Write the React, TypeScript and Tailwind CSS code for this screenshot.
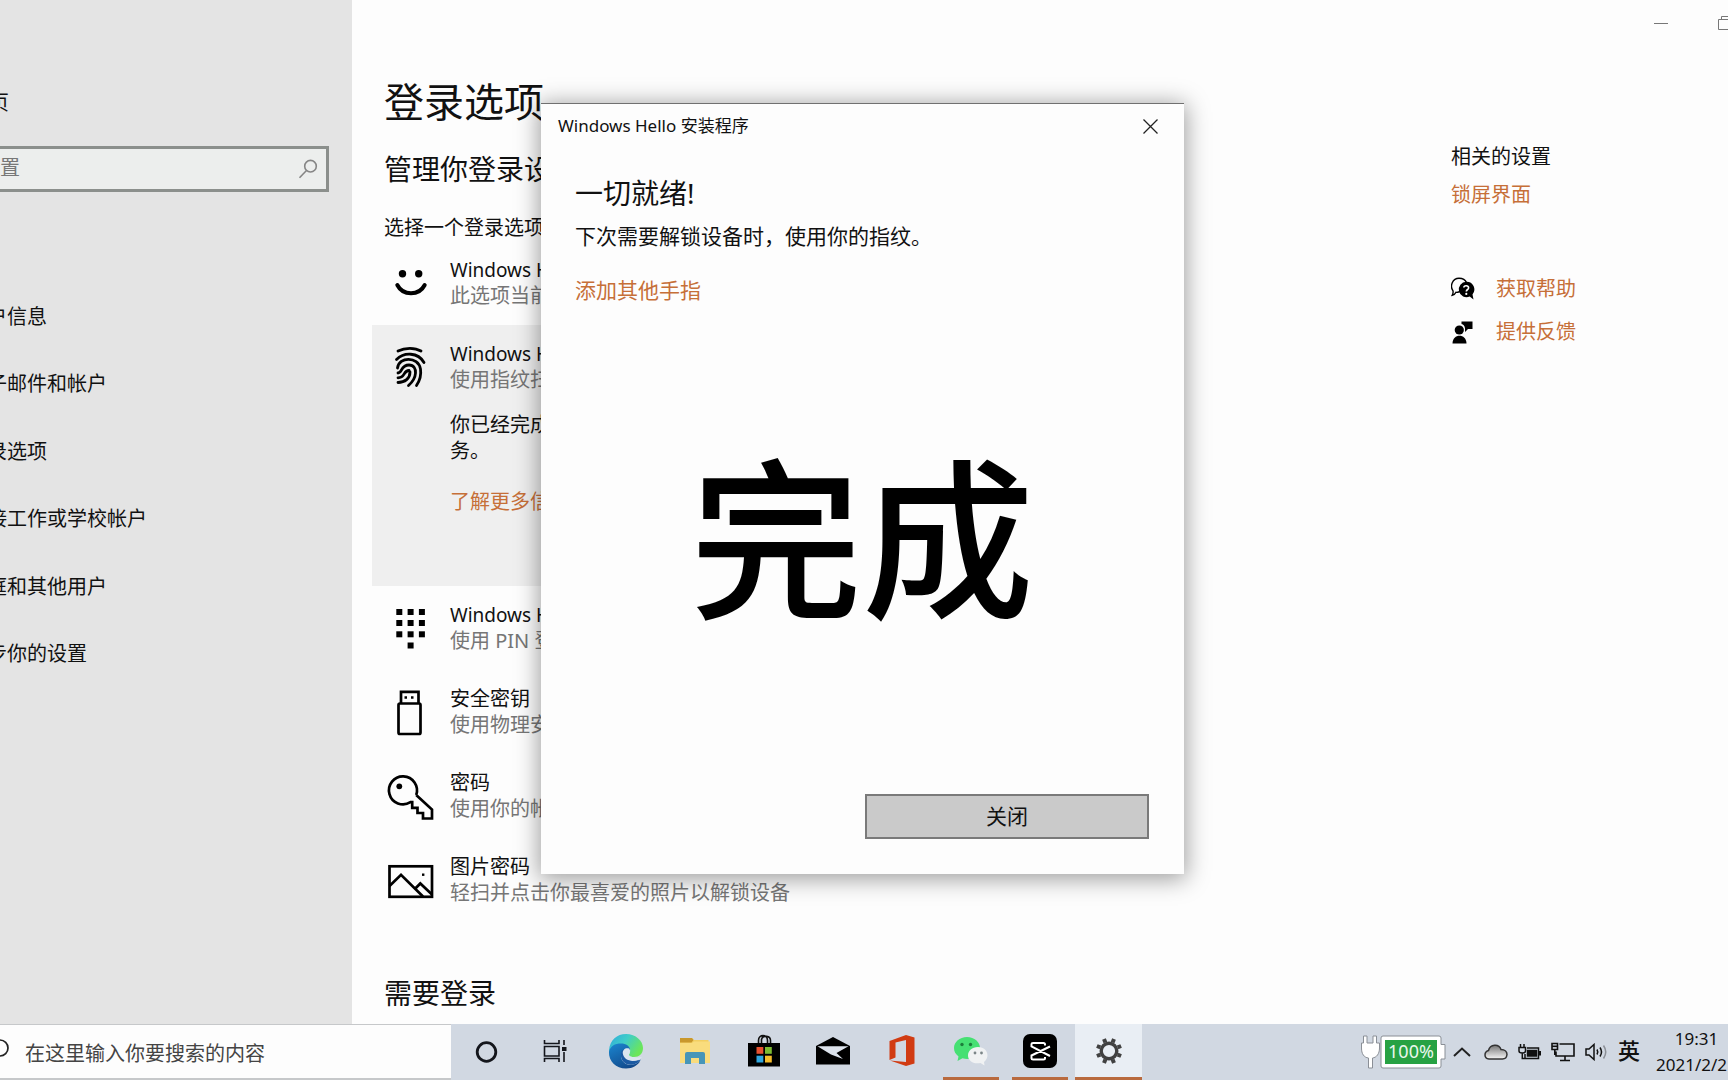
import React from "react";

const ICON = "h-[46px] w-[46px] shrink-0 overflow-visible";

function SmileIcon() {
  return (
    <svg viewBox="0 0 46 46" className={ICON} aria-hidden="true">
      <circle cx="14.5" cy="13.7" r="3.7" />
      <circle cx="30.7" cy="13.7" r="3.7" />
      <path d="M9.3 25C15 36 31 36 36.7 25" fill="none" stroke="#000" strokeWidth="4" strokeLinecap="round" />
    </svg>
  );
}

function FingerprintIcon() {
  return (
    <svg viewBox="0 0 46 46" className={ICON} fill="none" stroke="#000" strokeWidth="2.8" strokeLinecap="round" aria-hidden="true">
      <path d="M10 7C17 3.4 27 3.4 33 7" />
      <path d="M8.5 15.5C16 8 30 8 36 18.5" />
      <path d="M9.5 24C11 12.5 30 12 32.5 25C33.4 31 31.5 37 28.5 41.5" />
      <path d="M10 29C14.5 29 12.5 21 21 21C26 21 27.8 25 27.5 29C27.2 34 24.5 38 20.5 41.5" />
      <path d="M10 33.8C17.5 33.8 15 26.5 21 26.5" />
      <path d="M10 38.5C17 38.5 22 34.5 22 28" />
    </svg>
  );
}

function KeypadIcon() {
  const xs = [8.3, 19.6, 30.9];
  const ys = [4, 15, 26.3];
  return (
    <svg viewBox="0 0 46 46" className={ICON} aria-hidden="true">
      {ys.map((y) => xs.map((x) => <rect key={`${x}-${y}`} x={x} y={y} width="6" height="6" />))}
      <rect x="19.6" y="37.5" width="6" height="6" />
    </svg>
  );
}

function UsbIcon() {
  return (
    <svg viewBox="0 0 46 46" className={ICON} fill="none" stroke="#000" strokeWidth="2.7" aria-hidden="true">
      <rect x="10.5" y="14.5" width="22" height="30.5" rx="1.5" />
      <path d="M13 14.5V2.8H30.5V14.5" />
      <path d="M16.5 8.5H19M23 8.5H25.5" strokeWidth="2.5" />
    </svg>
  );
}

function KeyIcon() {
  return (
    <svg viewBox="0 0 46 46" className={ICON} fill="none" stroke="#000" strokeWidth="2.7" aria-hidden="true">
      <path d="M28.2 22A14 14 0 1 0 22.5 29.2H24.2V34.8H29.5V40H35V45.5H44V36.5L28.2 22" />
      <circle cx="11.3" cy="13.3" r="2.9" fill="#000" stroke="none" />
    </svg>
  );
}

function PictureIcon() {
  return (
    <svg viewBox="0 0 46 46" className={ICON} fill="none" stroke="#000" strokeWidth="2.7" aria-hidden="true">
      <rect x="1.5" y="9.3" width="42.5" height="30.5" />
      <path d="M1.5 29L13 17.8L35 39.5M27.3 31.5L32.3 26.5L44 37.5" />
      <rect x="34" y="16.5" width="2.4" height="2.4" fill="#000" stroke="none" />
    </svg>
  );
}

function HelpIcon() {
  return (
    <svg viewBox="0 0 24 24" className="h-6 w-6 overflow-visible" aria-hidden="true">
      <path d="M9 14.5C7.5 15 6.5 15.5 5 15.3C4.3 16.8 3 18 1.2 18.3C2 17 2.3 15.5 2 13.8C-1.5 9 1.5 1.2 8 1.2C12 1.2 14.5 3 15.5 5.5" fill="none" stroke="#000" strokeWidth="1.4" />
      <path d="M15.3 4.8a7.7 7.7 0 1 0 3.4 14.7l3.8 3-1-5A7.7 7.7 0 0 0 15.3 4.8z" />
      <path d="M12.8 10.5C13 8 17.8 8 17.6 11C17.5 12.6 15.3 12.5 15.3 14.6" fill="none" stroke="#fff" strokeWidth="1.6" />
      <circle cx="15.3" cy="16.9" r="1.1" fill="#fff" />
    </svg>
  );
}

function FeedbackIcon() {
  return (
    <svg viewBox="0 0 24 24" className="h-6 w-6" aria-hidden="true">
      <circle cx="8.3" cy="10" r="4.6" />
      <path d="M1.5 23.5C1.5 13 15.5 13 15.5 23.5z" />
      <path d="M10.5 1.5H21.5V9H17L14 12V8.5C13.8 6 12.5 4.5 10.5 4z" />
    </svg>
  );
}

const navItems = ["帐户信息", "电子邮件和帐户", "登录选项", "连接工作或学校帐户", "家庭和其他用户", "同步你的设置"];

function Sidebar() {
  return (
    <nav className="w-[352px] shrink-0 overflow-hidden bg-[#e4e4e4]" aria-label="设置">
      <div className="-ml-[33px] flex flex-col">
        <a href="#home" className="ml-[2px] mt-[88px] leading-[30px]">主页</a>
        <label className="-ml-10 mr-[23px] mt-[28px] flex h-[46px] items-center border-[3px] border-[#8b8f8c] bg-[#eceeed]">
          <input type="search" placeholder="查找设置" aria-label="查找设置" className="min-w-0 flex-1 bg-transparent pb-[2px] pl-[10px] outline-none placeholder:text-[#777]" />
          <svg viewBox="0 0 20 20" className="mr-2 h-5 w-5" fill="none" stroke="#858585" strokeWidth="1.6" aria-hidden="true">
            <circle cx="12.5" cy="7.2" r="5.8" />
            <path d="M8.5 11.5L1.5 18.8" />
          </svg>
        </label>
        <ul className="mt-[91px] grid h-[405px] grid-rows-6">
          {navItems.map((item) => (
            <li key={item} className="flex items-center">
              <a href="#nav">{item}</a>
            </li>
          ))}
        </ul>
      </div>
    </nav>
  );
}

type OptionProps = { icon: React.ReactNode; title: string; detail: string; active?: boolean; children?: React.ReactNode };

function Option({ icon, title, detail, active, children }: OptionProps) {
  return (
    <li className={active ? "flex h-[261px] gap-4 bg-[#efefef] pl-4" : "flex h-[84px] gap-4 pl-4"}>
      <div className="pt-[19px]">{icon}</div>
      <div className="pt-4 leading-[26px]">
        <h3 className={title.startsWith("W") ? "text-[19px]" : ""}>{title}</h3>
        <p className="text-[#767676]">{detail}</p>
        {children}
      </div>
    </li>
  );
}

function SignInOptions() {
  return (
    <main className="min-w-0 flex-1 overflow-hidden whitespace-nowrap pl-8">
      <h1 className="mt-[77px] text-[40px] leading-[50px]">登录选项</h1>
      <h2 className="mt-[22px] text-[28px] leading-10">管理你登录设</h2>
      <p className="mt-[26px] leading-[26px]">选择一个登录选项</p>
      <ul className="-ml-3 w-[600px]">
        <Option icon={<SmileIcon />} title="Windows Hello" detail="此选项当前" />
        <Option icon={<FingerprintIcon />} title="Windows Hello" detail="使用指纹扫" active>
          <p className="mt-[19px]">
            你已经完成
            <br />
            务。
          </p>
          <a href="#more" className="mt-[25px] block text-[#c66f38]">了解更多信</a>
        </Option>
        <Option icon={<KeypadIcon />} title="Windows Hello" detail="使用 PIN 登" />
        <Option icon={<UsbIcon />} title="安全密钥" detail="使用物理安" />
        <Option icon={<KeyIcon />} title="密码" detail="使用你的帐" />
        <Option icon={<PictureIcon />} title="图片密码" detail="轻扫并点击你最喜爱的照片以解锁设备" />
      </ul>
      <h2 className="mt-[51px] text-[28px] leading-10">需要登录</h2>
    </main>
  );
}

function RelatedPanel() {
  return (
    <aside className="w-[277px] shrink-0 overflow-hidden">
      <div className="ml-[203px] flex h-[46px] w-[78px] items-center justify-between">
        <button type="button" aria-label="最小化">
          <svg viewBox="0 0 14 14" className="h-[14px] w-[14px]" aria-hidden="true"><path d="M0 7.5H14" stroke="#777" /></svg>
        </button>
        <button type="button" aria-label="还原">
          <svg viewBox="0 0 14 14" className="h-[14px] w-[14px]" fill="none" stroke="#777" aria-hidden="true"><path d="M.5 3.5H10.5V13.5H.5zM3.5 3.5V.5H13.5V10.5H10.5" /></svg>
        </button>
      </div>
      <h2 className="mt-[97px] leading-7">相关的设置</h2>
      <a href="#lock" className="mt-[10px] block leading-7 text-[#c66f38]">锁屏界面</a>
      <a href="#help" className="mt-[66px] flex items-center gap-[21px] leading-7 text-[#c66f38]"><HelpIcon />获取帮助</a>
      <a href="#feedback" className="mt-[15px] flex items-center gap-[21px] leading-7 text-[#c66f38]"><FeedbackIcon />提供反馈</a>
    </aside>
  );
}

function HelloDialog() {
  return (
    <section role="dialog" aria-labelledby="dialog-title" className="absolute left-[541px] top-[103px] flex h-[771px] w-[643px] flex-col border-t border-[#707070] bg-[#fdfdfd] text-[21px] shadow-[0_3px_22px_2px_rgba(0,0,0,0.38)]">
      <header className="flex h-11 items-center justify-between pl-[17px] pr-[26px]">
        <h2 id="dialog-title" className="text-[17px]">Windows Hello 安装程序</h2>
        <button type="button" aria-label="关闭窗口">
          <svg viewBox="0 0 15 15" className="h-[15px] w-[15px]" stroke="#222" strokeWidth="1.3" aria-hidden="true"><path d="M.5.5L14.5 14.5M14.5.5L.5 14.5" /></svg>
        </button>
      </header>
      <div className="flex flex-1 flex-col pl-[34px] pr-[35px]">
        <h3 className="mt-[25px] text-[28px] leading-10">一切就绪!</h3>
        <p className="mt-[9px] leading-7">下次需要解锁设备时，使用你的指纹。</p>
        <a href="#add" className="mt-[26px] self-start leading-7 text-[#c66f38]">添加其他手指</a>
        <p className="mt-[134px] text-center text-[172px] font-medium leading-[200px] text-black">完成</p>
        <button type="button" className="mb-[35px] mt-auto h-[45px] w-[284px] self-end border-2 border-[#7a7a7a] bg-[#cacaca]">关闭</button>
      </div>
    </section>
  );
}

function EdgeIcon() {
  return (
    <svg viewBox="0 0 36 36" className="h-9 w-9" aria-hidden="true">
      <defs>
        <linearGradient id="edge-top" x1="0" y1="0" x2="1" y2="0.5">
          <stop offset="0" stopColor="#2fa9dd" />
          <stop offset="0.5" stopColor="#3fcdc8" />
          <stop offset="1" stopColor="#6be65a" />
        </linearGradient>
        <linearGradient id="edge-low" x1="0" y1="0" x2="0.6" y2="1">
          <stop offset="0" stopColor="#1b86d0" />
          <stop offset="1" stopColor="#124a8c" />
        </linearGradient>
      </defs>
      <path d="M1 17C2 7 9 1 18 1C28 1 35 8 35 15C35 21 31 24 26 24C22 24 20 22.5 21.5 20.5C24 16 20 12 15 12C8 12 3 15 1 22z" fill="url(#edge-top)" />
      <path d="M1 19C2 13 7 10.5 13 10.5C18 10.5 22 13 22 17C19 14.5 13 17 13 23C13 29 19 33 25 31.5C28 31 30.5 29 32.5 27.5C30 32 25 35.5 18 35.5C8 35.5 .5 28 1 19z" fill="url(#edge-low)" />
      <path d="M13 20C12 27 17 32.5 24 31.8C28 31.3 31 29 33 26.5C29 28 23 28.5 19.5 25C17.5 23 17.5 19 19.5 16.5C16 15.5 13.5 17 13 20z" fill="#1b5aa3" />
      <path d="M21 15.5C17.5 14.5 14.5 16.5 14.8 20.5C15.5 26 21.5 29 28 27.5C31 26.8 33 25.5 34 24C32 24.5 29 24.8 26 24C22 24 20 22.5 21.5 20.5C22.3 19 22 17 21 15.5z" fill="#dbe6f0" />
    </svg>
  );
}

function ExplorerIcon() {
  return (
    <svg viewBox="0 0 32 28" className="h-7 w-8" aria-hidden="true">
      <path d="M1 1H13L15 3H29.5V26H1z" fill="#f2cf63" />
      <path d="M1 1H13L14.5 3L12.5 5.5H1z" fill="#c9982c" />
      <path d="M1 6H13L15 4.5H31V26H1z" fill="#f9dc7d" />
      <path d="M6 27V17Q6 15 8 15H24Q26 15 26 17V27H20V21H12V27z" fill="#4796b8" />
    </svg>
  );
}

function StoreIcon() {
  return (
    <svg viewBox="0 0 34 33" className="h-[33px] w-[34px]" aria-hidden="true">
      <path d="M11.5 10V6.5C11.5 0 20.5 0 20.5 6.5V10M14.5 9V5.5C15.5 .8 24 1 23.5 7.5V10" fill="none" stroke="#111" strokeWidth="1.6" />
      <path d="M1 9H33V32.500H1z" fill="#000" />
      <path d="M9.5 13H16.300V19.800H9.500z" fill="#e8512f" />
      <path d="M18 13H24.800V19.800H18z" fill="#7dbb31" />
      <path d="M9.500 21.700H16.300V28.500H9.500z" fill="#2fa6de" />
      <path d="M18 21.700H24.800V28.500H18z" fill="#f6bd2b" />
    </svg>
  );
}

function MailIcon() {
  return (
    <svg viewBox="0 0 34 28" className="h-7 w-[34px]" aria-hidden="true">
      <path d="M17 0L34 9V27.5H0V9z" fill="#000" />
      <path d="M1.500 9.300H32.500L20.500 16L27 22L15 17.500z" fill="#dde3ec" />
    </svg>
  );
}

function OfficeIcon() {
  return (
    <svg viewBox="0 0 26 31" className="h-[31px] w-[26px]" aria-hidden="true">
      <path d="M17 0L25.5 2.5V28.5L17 31L1 25.5L17 27V5L6.5 7.5V22.5L.5 25V6z" fill="#d13b12" />
    </svg>
  );
}

function WechatIcon() {
  return (
    <svg viewBox="0 0 36 30" className="h-[30px] w-9" aria-hidden="true">
      <path d="M14 1C6.5 1 1 6 1 12C1 15.5 2.5 18 5.5 20.5L4.5 25L9.5 22.3C19 25 27 19 27 12C27 6 21.5 1 14 1z" fill="#46e073" />
      <circle cx="9" cy="8.5" r="1.7" fill="#1c7d3a" />
      <circle cx="17.5" cy="8.5" r="1.7" fill="#1c7d3a" />
      <path d="M25 11C19 11 15 15 15 19.5C15 24.5 20 28.5 27.5 27L31.5 29.5L31 26C37.5 21 34.5 11 25 11z" fill="#f0f2f3" />
      <circle cx="22" cy="17" r="1.4" fill="#7b8587" />
      <circle cx="28.5" cy="17" r="1.4" fill="#7b8587" />
    </svg>
  );
}

function CapcutIcon() {
  return (
    <svg viewBox="0 0 34 34" className="h-[34px] w-[34px]" aria-hidden="true">
      <rect width="34" height="34" rx="7" />
      <path d="M27 12.5L8.5 21.5V24.5Q8.5 25.5 10 25.5H20.5Q22 25.5 22 24V23M27 22L8.5 12.5V10Q8.5 9 10 9H20.5Q22 9 22 10.5V11.5" fill="none" stroke="#fff" strokeWidth="2" />
    </svg>
  );
}

function GearIcon() {
  return (
    <svg viewBox="0 0 26 26" className="h-[26px] w-[26px]" fill="none" stroke="#414141" aria-hidden="true">
      <circle cx="13" cy="13" r="7.8" strokeWidth="3.4" />
      <path d="M16.6 4.4L18 .9M21.6 9.4L25.1 8M21.6 16.6L25.1 18M16.6 21.6L18 25.1M9.4 21.6L8 25.1M4.4 16.6L.9 18M4.4 9.4L.9 8M9.4 4.4L8 .9" strokeWidth="4" />
    </svg>
  );
}

type AppButton = { name: string; icon: React.ReactNode; state?: "open" | "active" };

const apps: AppButton[] = [
  { name: "Microsoft Edge", icon: <EdgeIcon /> },
  { name: "文件资源管理器", icon: <ExplorerIcon /> },
  { name: "Microsoft Store", icon: <StoreIcon /> },
  { name: "邮件", icon: <MailIcon /> },
  { name: "Office", icon: <OfficeIcon /> },
  { name: "微信", icon: <WechatIcon />, state: "open" },
  { name: "剪映", icon: <CapcutIcon />, state: "open" },
  { name: "设置", icon: <GearIcon />, state: "active" },
];

function Tray() {
  return (
    <div className="ml-auto flex shrink-0 items-center">
      <svg viewBox="0 0 86 34" className="h-[34px] w-[86px]" role="img" aria-label="电池 100%">
        <g fill="#fff" stroke="#8a8f96" strokeWidth="1">
          <path d="M3.5 1H7V8H13V1H16.5V8H19.5V13C19.5 19 16.5 22.5 12.5 23V33H8.5V23C4 22.5 1.5 19 1.5 13V8H3.5z" />
          <path d="M23 1H79Q81 1 81 3V9.5H85V24H81V31Q81 33 79 33H23Q21 33 21 31V3Q21 1 23 1z" />
        </g>
        <rect x="25" y="5" width="52" height="24" fill="#27a243" />
        <text x="51" y="23" textAnchor="middle" fontSize="18" fill="#e9f7ec">100%</text>
      </svg>
      <svg viewBox="0 0 18 10" className="ml-[7px] h-[10px] w-[18px]" fill="none" stroke="#222" strokeWidth="2" aria-hidden="true"><path d="M1 9L9 1.5L17 9" /></svg>
      <svg viewBox="0 0 24 18" className="ml-[13px] h-[18px] w-6" aria-hidden="true">
        <defs>
          <linearGradient id="cloud" x1="0" y1="0" x2="0" y2="1"><stop offset="0" stopColor="#777" /><stop offset="1" stopColor="#f5f5f5" /></linearGradient>
        </defs>
        <path d="M5 16Q1 15.5 1 12T4.5 7.5C6 1 15 .5 17 6.5C21 6.5 23 9 23 11.5Q22.5 16 18.5 16z" fill="url(#cloud)" stroke="#333" strokeWidth="1.5" />
      </svg>
      <svg viewBox="0 0 24 18" className="ml-[10px] h-[18px] w-6" fill="none" stroke="#111" strokeWidth="1.5" aria-hidden="true">
        <path d="M2.5 1V4M6 1V4M1 4.5H7.5V8Q7.5 10 4.3 10Q1 10 1 8zM4.3 10V15.5H7M9 5H20.5V15.5H7V11" />
        <path d="M9.5 7.5H18.5V13H9.5z" fill="#111" />
        <path d="M22 8V12.5" strokeWidth="2" />
      </svg>
      <svg viewBox="0 0 24 20" className="ml-[9px] h-5 w-6" fill="none" stroke="#111" strokeWidth="1.6" aria-hidden="true">
        <path d="M8.5 2H23V14H5V9.5M14 14V18.5M9 18.5H19M1 1.5H6.5V7.5H1zM3.8 7.5V13" />
        <path d="M1 4.3H6.5" />
      </svg>
      <svg viewBox="0 0 24 18" className="ml-[10px] h-[18px] w-6" fill="none" stroke="#111" strokeWidth="1.5" aria-hidden="true">
        <path d="M1 6H4L9 1.5V16.5L4 12H1z" />
        <path d="M12 6.5Q13.5 9 12 11.5M15 4.5Q18 9 15 13.5" />
        <path d="M18.5 2.5Q23 9 18.5 15.5" stroke="#8b8f96" />
      </svg>
      <span className="ml-[9px] w-[23px] pb-1 text-[22px] font-medium leading-7">英</span>
      <div className="-mr-[9px] ml-[15px] w-[81px] overflow-hidden text-[17px] leading-[26px]">
        <p className="text-center">19:31</p>
        <p>2021/2/2</p>
      </div>
    </div>
  );
}

function Taskbar() {
  return (
    <footer className="flex h-14 shrink-0 items-stretch overflow-hidden bg-[#d1d8e2]">
      <label className="flex w-[451px] shrink-0 items-center border-b-2 border-t border-[#c6c8ca] bg-[#fdfdfd]">
        <svg viewBox="0 0 18 18" className="-ml-[9px] mb-2 h-[18px] w-[18px] shrink-0" fill="none" stroke="#222" strokeWidth="1.7" aria-hidden="true"><circle cx="9" cy="9" r="8" /></svg>
        <input type="search" placeholder="在这里输入你要搜索的内容" aria-label="搜索" className="ml-4 min-w-0 flex-1 bg-transparent pt-1 outline-none placeholder:text-[#444]" />
      </label>
      <button type="button" aria-label="Cortana" className="flex w-[69px] shrink-0 items-center justify-center">
        <svg viewBox="0 0 24 24" className="h-6 w-6" fill="none" stroke="#14161c" strokeWidth="2.8" aria-hidden="true"><circle cx="12.5" cy="12" r="9.3" /></svg>
      </button>
      <button type="button" aria-label="任务视图" className="mr-[3px] flex w-[69px] shrink-0 items-center justify-center pb-[2px]">
        <svg viewBox="0 0 24 24" className="h-6 w-6" fill="none" stroke="#14161c" strokeWidth="1.6" aria-hidden="true">
          <path d="M1.5 1V4.5H16V1M1.5 23V19.5H16V23M1.5 7.5H16V17H1.5zM21 1V6M21 13V23" />
          <path d="M19 8H23.5V12H19z" fill="#14161c" stroke="none" />
        </svg>
      </button>
      <div className="flex gap-[2px]">
        {apps.map((app) => (
          <button
            key={app.name}
            type="button"
            aria-label={app.name}
            className={app.state === "active" ? "flex w-[67px] flex-col items-center bg-[#e9eef4]" : "flex w-[67px] flex-col items-center"}
          >
            <span className="flex flex-1 items-center">{app.icon}</span>
            {app.state === "open" && <span className="h-[3px] w-14 bg-[#b96a3e]" />}
            {app.state === "active" && <span className="h-[3px] w-full bg-[#b96a3e]" />}
            {!app.state && <span className="h-[3px]" />}
          </button>
        ))}
      </div>
      <Tray />
    </footer>
  );
}

export default function App() {
  return (
    <div className="relative flex h-screen flex-col overflow-hidden bg-[#fdfdfd] font-['Noto_Sans','Noto_Sans_CJK_SC',sans-serif] text-[20px] text-[#111]" lang="zh-CN">
      <div className="flex min-h-0 flex-1">
        <Sidebar />
        <SignInOptions />
        <RelatedPanel />
      </div>
      <Taskbar />
      <HelloDialog />
    </div>
  );
}
